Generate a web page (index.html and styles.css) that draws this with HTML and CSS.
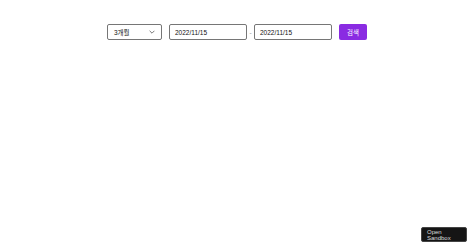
FILE: index.html
```html
<!DOCTYPE html>
<html lang="ko">
<head>
<meta charset="utf-8">
<link rel="stylesheet" href="styles.css">
</head>
<body>
<div class="search">
  <div class="select">
    <span>3개월</span>
    <svg class="chev" width="6" height="4" viewBox="0 0 6 4"><path d="M0.6 0.8 L3 3.2 L5.4 0.8" fill="none" stroke="#555" stroke-width="0.8"/></svg>
  </div>
  <div class="date">2022/11/15</div>
  <span class="dash">-</span>
  <div class="date">2022/11/15</div>
  <button class="btn">검색</button>
</div>
<a class="sandbox">Open<br>Sandbox</a>
</body>
</html>
```
FILE: styles.css
```css
html, body {
  margin: 0;
  padding: 0;
  background: #fff;
  width: 474px;
  height: 248px;
  overflow: hidden;
  font-family: "Liberation Sans", "Noto Sans CJK KR", sans-serif;
}
.search {
  display: flex;
  justify-content: center;
  align-items: center;
  padding-top: 24px;
  font-size: 6.5px;
  color: #111;
}
.select {
  box-sizing: border-box;
  width: 55px;
  height: 16px;
  border: 1px solid #767676;
  border-radius: 2px;
  display: flex;
  align-items: center;
  justify-content: space-between;
  padding: 0 6px 0 6px;
  margin-right: 7px;
}
.chev { display: block; }
.date {
  box-sizing: border-box;
  width: 78px;
  height: 16px;
  border: 1px solid #767676;
  border-radius: 2px;
  display: flex;
  align-items: center;
  padding: 0 5px;
}
.dash {
  width: 7px;
  text-align: center;
  color: #999;
}
.btn {
  box-sizing: border-box;
  width: 28px;
  height: 16px;
  margin-left: 7px;
  border: none;
  border-radius: 2px;
  background: #8a2be2;
  color: #fff;
  font-family: inherit;
  font-size: 6.5px;
  padding: 0;
}
.sandbox {
  position: absolute;
  left: 421px;
  top: 227px;
  box-sizing: border-box;
  width: 46px;
  height: 15px;
  background: #151515;
  border: 1px solid #444;
  border-radius: 2px;
  color: #ddd;
  font-size: 6px;
  line-height: 6px;
  padding: 1px 5px 0;
}
```
